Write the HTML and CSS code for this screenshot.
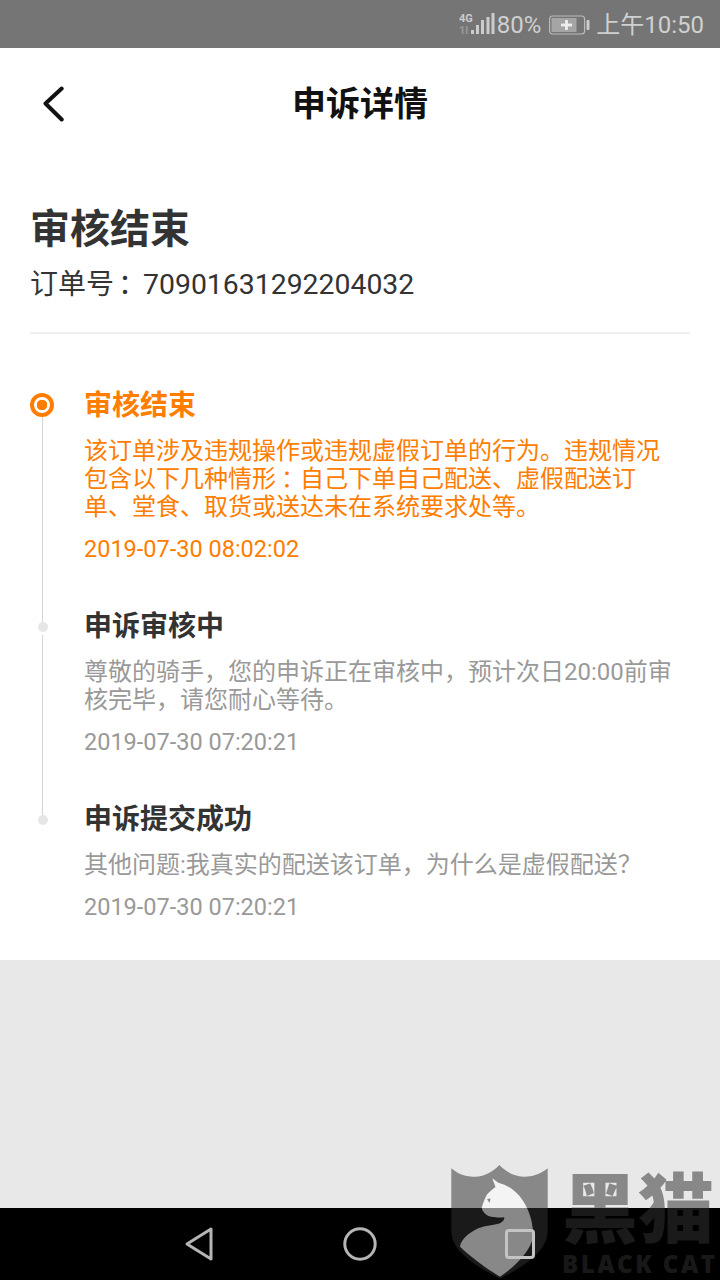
FILE: index.html
```html
<!DOCTYPE html>
<html lang="zh">
<head>
<meta charset="utf-8">
<title>申诉详情</title>
<link rel="stylesheet" href="styles.css">
</head>
<body>
<div class="screen">
  <div class="status">
    <svg class="signal" width="36" height="26" viewBox="0 0 36 26">
      <text x="0" y="11" class="net">4G</text>
      <text x="0" y="23" class="net dim">1l</text>
      <rect x="12" y="19" width="3" height="4" fill="#ccc"/>
      <rect x="17" y="14" width="3" height="9" fill="#ccc"/>
      <rect x="22" y="9" width="3" height="14" fill="#ccc"/>
      <rect x="27.5" y="6" width="3" height="17" fill="#ccc"/>
      <rect x="32.5" y="2" width="3" height="21" fill="#ccc"/>
    </svg>
    <span class="pct">80%</span>
    <svg class="batt" width="41" height="22" viewBox="0 0 41 22">
      <rect x="0.6" y="3" width="35" height="18" rx="3" fill="none" stroke="#bbb" stroke-width="1.2"/>
      <rect x="2.5" y="5" width="25" height="14" fill="#a5a5a5"/>
      <rect x="12" y="10.6" width="11" height="2.8" fill="#eee"/>
      <rect x="16.1" y="7" width="2.8" height="10" fill="#eee"/>
      <rect x="37.5" y="7" width="3" height="10" rx="1" fill="#ccc"/>
    </svg>
    <span class="clock">上午10:50</span>
  </div>

  <main class="page">
    <header class="nav">
      <svg class="back" width="24" height="36" viewBox="0 0 24 36">
        <path d="M20.7 2.5 L4.5 17.5 L20.7 33.5" fill="none" stroke="#111" stroke-width="4" stroke-linecap="round" stroke-linejoin="round"/>
      </svg>
      <h1 class="nav-title">申诉详情</h1>
    </header>

    <section class="summary">
      <h2 class="state">审核结束</h2>
      <p class="order">订单号<span class="colon">：</span><span class="order-no">70901631292204032</span></p>
    </section>

    <ol class="timeline">
      <li class="step current">
        <span class="ring"></span>
        <h3 class="step-title">审核结束</h3>
        <p class="step-text">该订单涉及违规操作或违规虚假订单的行为。违规情况包含以下几种情形<span class="colon-in">：</span>自己下单自己配送、虚假配送订单、堂食、取货或送达未在系统要求处等。</p>
        <p class="step-time">2019-07-30 08:02:02</p>
      </li>
      <li class="step">
        <span class="dot"></span>
        <h3 class="step-title">申诉审核中</h3>
        <p class="step-text">尊敬的骑手，您的申诉正在审核中，预计次日20:00前审核完毕，请您耐心等待。</p>
        <p class="step-time">2019-07-30 07:20:21</p>
      </li>
      <li class="step last">
        <span class="dot"></span>
        <h3 class="step-title">申诉提交成功</h3>
        <p class="step-text">其他问题:我真实的配送该订单，为什么是虚假配送？</p>
        <p class="step-time">2019-07-30 07:20:21</p>
      </li>
    </ol>
  </main>

  <div class="filler"></div>

  <nav class="sysbar">
    <svg class="sys-icon" width="32" height="36" viewBox="0 0 32 36"><path d="M27 3 L3 18 L27 33 Z" fill="none" stroke="#b5b5b5" stroke-width="3" stroke-linejoin="round"/></svg>
    <svg class="sys-icon" width="34" height="34" viewBox="0 0 34 34"><circle cx="17" cy="17" r="15.2" fill="none" stroke="#b5b5b5" stroke-width="3"/></svg>
    <svg class="sys-icon" width="30" height="30" viewBox="0 0 30 30"><rect x="1.5" y="1.5" width="27" height="27" rx="2.5" fill="none" stroke="#c4c4c4" stroke-width="3"/></svg>
  </nav>

  <div class="mark">
    <svg class="shield" width="97" height="114" viewBox="0 0 97 114">
      <defs>
        <clipPath id="above"><rect x="0" y="0" width="97" height="43"/></clipPath>
        <clipPath id="below"><rect x="0" y="43" width="97" height="71"/></clipPath>
        <path id="cat" d="M41.3 13.3 L47.3 17.7 C60 21 70 30 76 43 C82 56 83 68 81 76 C76 90 62 103 49 111.7 C36 104 20 92 9 81.7 C10 74 18 68 27.3 63.3 C36 60 45 60 49 58.3 C52 56.5 53.5 54.5 53.3 52.3 C46 53 38 52 35.7 50 C33 48 31 45.5 30.7 42.7 C32 38 34 33 36 29.5 C39 26 42 24 44.5 22 Z"/>
      </defs>
      <path class="shield-bg" d="M0.3 3.3 C9 11 18 12 24 11.7 C34 11.5 43 6 48.3 0 C54 6 63 11.5 72.3 11.7 C80 12 88 10 96.7 3.3 V66 C96.7 84 78 99 49 113.5 C20 99 0.3 84 0.3 66 Z"/>
      <use href="#cat" class="cat-top" clip-path="url(#above)"/>
      <use href="#cat" class="cat-low" clip-path="url(#below)"/>
      <path d="M36 34 L39.5 33.5 L38.5 38 Z" fill="#888"/>
    </svg>
    <div class="mark-text">
      <span class="mark-cn">黑猫</span>
      <span class="mark-en">BLACK CAT</span>
    </div>
  </div>
</div>
</body>
</html>
```

FILE: styles.css
```css
* { box-sizing: border-box; }
html, body { margin: 0; padding: 0; }
body { font-family: Roboto, "Noto Sans CJK SC", sans-serif; }
h1, h2, h3, p, ol { margin: 0; padding: 0; }
ol { list-style: none; }

.screen {
  position: relative;
  width: 720px;
  height: 1280px;
  overflow: hidden;
  display: flex;
  flex-direction: column;
  background: #e8e8e8;
}

.status {
  height: 48px;
  flex: none;
  background: #757575;
  color: #d0d0d0;
  display: flex;
  align-items: center;
  justify-content: flex-end;
  padding-right: 16px;
  font-size: 24px;
}
.signal { margin-right: 2px; }
.net { font: 700 11px Roboto, sans-serif; fill: #ccc; }
.net.dim { fill: #9a9a9a; }
.pct { margin: 2px 8px 0 0; }
.batt { margin-right: 6px; }
.clock { margin-bottom: 4px; }

.page { background: #fff; flex: none; height: 912px; padding: 0 30px; }

.nav {
  height: 112px;
  position: relative;
  display: flex;
  align-items: center;
  justify-content: center;
}
.back { position: absolute; left: 11px; top: 38px; }
.nav-title { font-size: 34px; font-weight: 700; color: #111; line-height: 1; }

.summary { height: 174px; padding: 46px 0 0 0; border-bottom: 2px solid #f0f0f0; }
.state { font-size: 40px; line-height: 48px; font-weight: 700; color: #333; }
.order { margin-top: 13px; font-size: 28px; line-height: 36px; color: #333; }
.colon { padding-left: 4px; }
.colon-in { padding-left: 5px; margin-right: -5px; }
.order-no { font-size: 28.4px; margin-left: -3px; }

.timeline { padding-top: 52px; }
.step { position: relative; padding-left: 54px; }
.step + .step { margin-top: 41px; }
.step::before {
  content: "";
  position: absolute;
  left: 12px;
  top: 28px;
  bottom: -61px;
  width: 1px;
  background: #d6d6d6;
}
.step.last::before { display: none; }
.ring {
  position: absolute;
  z-index: 1;
  left: 0;
  top: 7px;
  width: 24px;
  height: 24px;
  border-radius: 50%;
  border: 4.5px solid #ff7d00;
  background: radial-gradient(circle, #ff7d00 0 5px, #fff 5.5px);
}
.dot {
  position: absolute;
  z-index: 1;
  left: 8px;
  top: 15px;
  width: 10px;
  height: 10px;
  border-radius: 50%;
  background: #e6e6e6;
}
.step-title { font-size: 28px; line-height: 40px; font-weight: 700; color: #333; }
.step-text { margin-top: 11px; font-size: 24px; line-height: 28px; color: #999; width: 590px; }
.step-time { margin-top: 11px; font-size: 23.5px; line-height: 34px; color: #999; }
.current .step-title, .current .step-text, .current .step-time { color: #ff7d00; }

.filler { flex: 1; }

.sysbar {
  height: 72px;
  flex: none;
  background: #000;
  display: grid;
  grid-template-columns: repeat(3, 160px);
  justify-content: center;
  align-items: center;
  justify-items: center;
}
.sys-icon { position: relative; z-index: 2; }

.mark {
  position: absolute;
  z-index: 1;
  left: 451px;
  top: 1165px;
  display: flex;
  gap: 14px;
  pointer-events: none;
}
.shield-bg { fill: rgba(49, 49, 49, .526); }
.cat-top { fill: #f4f4f4; }
.cat-low { fill: #888; }
.mark-text { display: flex; flex-direction: column; padding-top: 8px; }
.mark-cn { font-size: 76px; line-height: 76px; font-weight: 900; color: rgba(49, 49, 49, .526); white-space: nowrap; }
.mark-en { margin-top: 2px; font-size: 24px; line-height: 26px; font-weight: 800; color: rgba(49, 49, 49, .526); letter-spacing: 2.5px; white-space: nowrap; font-family: "Open Sans", sans-serif; }
```
